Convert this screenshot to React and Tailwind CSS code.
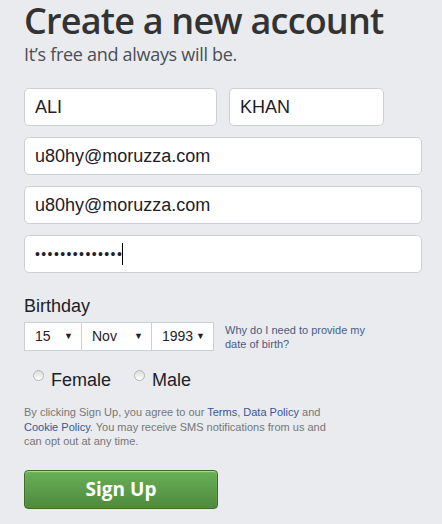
export default function App() {
  const sans = { fontFamily: '"Liberation Sans", Arial, sans-serif' }
  return (
    <div className="min-h-[524px] w-[442px] bg-[#e9ebee] pl-6 pr-5 pt-0" style={sans}>
      <h1
        className="pt-[1px] text-[36px] font-semibold leading-[40px] tracking-[-0.8px] text-[#333333]"
        style={{ fontFamily: '"Open Sans", sans-serif' }}
      >
        Create a new account
      </h1>
      <p
        className="mt-[1px] text-[18px] leading-[24px] tracking-[-0.3px] text-[#4b4f56]"
        style={{ fontFamily: '"Open Sans", sans-serif' }}
      >
        It’s free and always will be.
      </p>

      <div className="mt-[22px] flex flex-col gap-[11px]">
        <div className="flex gap-3">
          <Field value="ALI" className="w-[193px]" />
          <Field value="KHAN" className="w-[155px]" />
        </div>
        <Field value="u80hy@moruzza.com" className="w-[398px]" />
        <Field value="u80hy@moruzza.com" className="w-[398px]" />
        <div className="flex h-[38px] w-[398px] items-center rounded-[5px] border border-[#ccd0d5] bg-white pl-[10px]">
          <span className="text-[14px] tracking-[1.4px] text-[#1d2129]">••••••••••••••</span>
          <span className="-ml-[1px] h-[22px] w-[1px] bg-black" />
        </div>
      </div>

      <div className="mt-[22px] text-[18px] leading-[22px] text-[#1d2129]">Birthday</div>
      <div className="mt-[5px] flex items-center">
        <div className="flex">
          <Select value="15" className="w-[58px]" />
          <Select value="Nov" className="w-[71px] -ml-[1px]" />
          <Select value="1993" className="w-[63px] -ml-[1px]" />
        </div>
        <div className="ml-[11px] w-[150px] text-[11px] leading-[14px] text-[#4b5c83]">
          Why do I need to provide my date of birth?
        </div>
      </div>

      <div className="mt-[16px] flex items-center pl-[9px] text-[18px] text-[#1d2129]">
        <label className="flex items-center">
          <span className="mb-[10px] h-[11px] w-[11px] rounded-full border border-[#b4b4b4] bg-gradient-to-b from-[#dcdcdc] to-white" />
          <span className="ml-[7px]">Female</span>
        </label>
        <label className="ml-[23px] flex items-center">
          <span className="mb-[10px] h-[11px] w-[11px] rounded-full border border-[#b4b4b4] bg-gradient-to-b from-[#dcdcdc] to-white" />
          <span className="ml-[7px]">Male</span>
        </label>
      </div>

      <p className="mt-[11px] w-[310px] text-[11px] leading-[14.5px] text-[#777777]">
        By clicking Sign Up, you agree to our <span className="text-[#385898]">Terms</span>,{' '}
        <span className="text-[#385898]">Data Policy</span> and{' '}
        <span className="text-[#385898]">Cookie Policy</span>. You may receive SMS notifications from us and
        can opt out at any time.
      </p>

      <button
        className="mt-[21px] flex h-[39px] w-[194px] items-center justify-center rounded-[4px] border border-[#3b6e22] bg-gradient-to-b from-[#69b057] to-[#4f8a3e] text-[19px] font-bold text-white shadow-[inset_0_1px_1px_#a4e388]"
        style={{ fontFamily: '"Open Sans", sans-serif' }}
      >
        Sign Up
      </button>
    </div>
  )
}

function Field({ value, className }) {
  return (
    <div
      className={
        'flex h-[38px] items-center rounded-[5px] border border-[#ccd0d5] bg-white px-[10px] text-[18px] text-[#1d2129] ' +
        className
      }
    >
      {value}
    </div>
  )
}

function Select({ value, className }) {
  return (
    <div
      className={
        'flex h-[29px] items-center justify-between border border-[#ccd0d5] bg-white pl-[10px] pr-[8px] text-[14px] text-[#1d2129] ' +
        className
      }
    >
      <span>{value}</span>
      <span className="text-[9px]">▼</span>
    </div>
  )
}
